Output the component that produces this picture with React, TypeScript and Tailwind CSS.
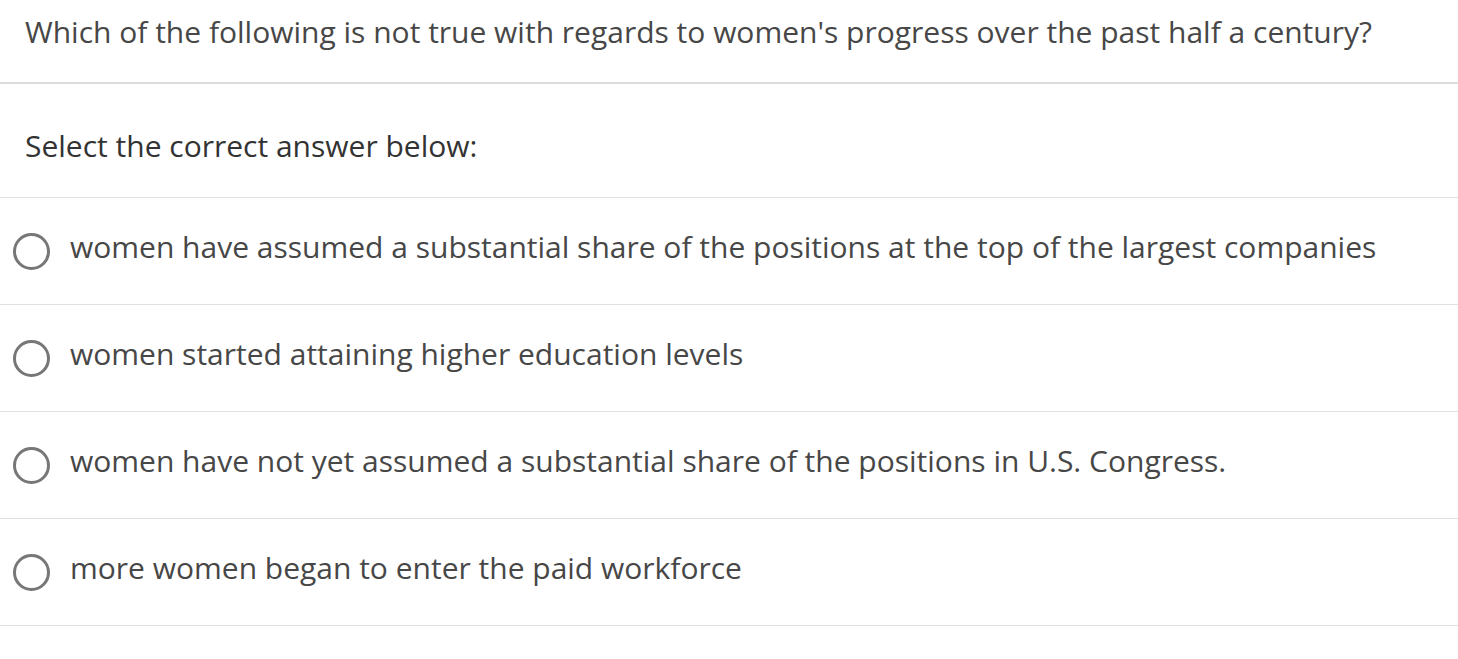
import React from "react";

const options = [
  "women have assumed a substantial share of the positions at the top of the largest companies",
  "women started attaining higher education levels",
  "women have not yet assumed a substantial share of the positions in U.S. Congress.",
  "more women began to enter the paid workforce",
];

export default function App() {
  return (
    <div className="w-[1458px] h-[659px] bg-white text-[#474747] text-[30px] leading-[45px]" style={{ fontFamily: '"Open Sans", sans-serif' }}>
      <div className="pl-[25px] pt-[9px] h-[84px] border-b-2 border-[#dcdcdc]">
        Which of the following is not true with regards to women's progress over the past half a century?
      </div>
      <div className="pl-[25px] pt-[39px] h-[114px] border-b border-[#e0e0e0] text-[#333]">
        Select the correct answer below:
      </div>
      {options.map((o) => (
        <div key={o} className="flex items-center h-[107px] border-b border-[#e0e0e0]">
          <div className="ml-[13px] w-[37px] h-[37px] rounded-full border-[3px] border-[#777] shrink-0" />
          <div className="ml-[20px] -mt-[9px]">{o}</div>
        </div>
      ))}
    </div>
  );
}
